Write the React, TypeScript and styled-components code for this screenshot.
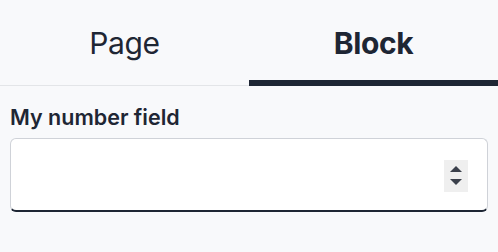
import React, { useState } from 'react';
import styled, { createGlobalStyle } from 'styled-components';

const GlobalStyle = createGlobalStyle`
    html, body {
        margin: 0;
        padding: 0;
        background: #f8f9fb;
        font-family: Inter, "Noto Sans", sans-serif;
        color: #1e2634;
    }
`;

const Panel = styled.div`
    width: 498px;
    height: 252px;
    background: #f8f9fb;
    display: flex;
    flex-direction: column;
`;

const TabBar = styled.div`
    display: grid;
    grid-template-columns: 1fr 1fr;
    height: 86px;
    border-bottom: 1px solid #e3e5e8;
    box-sizing: border-box;
`;

const Tab = styled.button<{ $active?: boolean }>`
    all: unset;
    display: flex;
    align-items: center;
    justify-content: center;
    padding-top: 6px;
    font-size: 30px;
    letter-spacing: -0.4px;
    font-weight: ${(p) => (p.$active ? 700 : 400)};
    color: #1e2634;
    cursor: pointer;
    box-sizing: border-box;
    margin-bottom: -1px;
    border-bottom: 6px solid ${(p) => (p.$active ? '#1e2634' : 'transparent')};
`;

const Body = styled.div`
    padding: 18px 10px 0 10px;
    display: flex;
    flex-direction: column;
    gap: 8px;
`;

const Label = styled.label`
    font-size: 21.5px;
    font-weight: 600;
    color: #1e2634;
    line-height: 26px;
`;

const Field = styled.div`
    height: 74px;
    box-sizing: border-box;
    background: #ffffff;
    border: 1px solid #cfd2d8;
    border-bottom: 2px solid #1e2634;
    border-radius: 6px;
    display: flex;
    align-items: center;
    padding: 0 19px 0 12px;
`;

const NumberInput = styled.input`
    flex: 1;
    border: none;
    outline: none;
    background: transparent;
    font: inherit;
    font-size: 18px;
    color: #1e2634;
    -moz-appearance: textfield;
    &::-webkit-inner-spin-button,
    &::-webkit-outer-spin-button {
        -webkit-appearance: none;
        margin: 0;
    }
`;

const Spinner = styled.div`
    width: 24px;
    height: 32px;
    background: #efefef;
    display: flex;
    flex-direction: column;
    align-items: center;
    justify-content: center;
    gap: 7px;
    margin-top: 2px;
`;

const Arrow = styled.svg`
    display: block;
`;

export default function App() {
    const [tab, setTab] = useState('block');
    const [value, setValue] = useState('');

    return (
        <Panel>
            <GlobalStyle />
            <TabBar>
                <Tab $active={tab === 'page'} onClick={() => setTab('page')}>Page</Tab>
                <Tab $active={tab === 'block'} onClick={() => setTab('block')}>Block</Tab>
            </TabBar>
            <Body>
                <Label htmlFor="num">My number field</Label>
                <Field>
                    <NumberInput id="num" type="number" value={value} onChange={(e) => setValue(e.target.value)} />
                    <Spinner>
                        <Arrow width="12" height="6" viewBox="0 0 12 6">
                            <path d="M6 0 L12 6 L0 6 Z" fill="#3b404b" />
                        </Arrow>
                        <Arrow width="12" height="6" viewBox="0 0 12 6">
                            <path d="M0 0 L12 0 L6 6 Z" fill="#3b404b" />
                        </Arrow>
                    </Spinner>
                </Field>
            </Body>
        </Panel>
    );
}
